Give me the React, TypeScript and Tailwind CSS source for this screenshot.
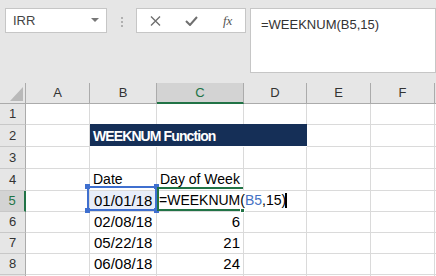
import React from 'react';

const rowHeights = [21, 22, 22, 22, 21, 21, 21, 21, 10];
const colLetters = ['A', 'B', 'C', 'D', 'E', 'F'];

const Toolbar: React.FC = () => (
  <div className="flex h-[83px] items-start bg-[#e6e6e6] pl-[5px] pt-[8px]">
    {/* Name box */}
    <div className="flex h-[25px] w-[102px] items-center justify-between border border-[#c6c6c6] bg-white pl-[7px] pr-[7px]">
      <span className="text-[13px] leading-[15px] text-[#444]">IRR</span>
      <svg width="8" height="5" viewBox="0 0 8 5">
        <path d="M0 0h8L4 4z" fill="#777" />
      </svg>
    </div>

    {/* Separator dots */}
    <div className="ml-[14px] mt-[9px] flex flex-col gap-[2px]">
      <span className="h-[2px] w-[2px] bg-[#b0b0b0]" />
      <span className="h-[2px] w-[2px] bg-[#b0b0b0]" />
      <span className="h-[2px] w-[2px] bg-[#b0b0b0]" />
    </div>

    {/* Cancel / enter / fx */}
    <div className="ml-[13px] flex h-[25px] w-[110px] items-center border border-[#c6c6c6] bg-white pl-[13px]">
      <svg width="11" height="10" viewBox="0 0 11 10">
        <path d="M1 0.5l9 9M10 0.5l-9 9" stroke="#6f6f6f" strokeWidth="1.4" />
      </svg>
      <svg className="ml-[24px]" width="13" height="10" viewBox="0 0 13 10">
        <path d="M1 5l4 4 7-8" stroke="#6f6f6f" strokeWidth="2" fill="none" />
      </svg>
      <span className="ml-[25px] font-['Liberation_Serif',serif] text-[13px] italic leading-[15px] text-[#555]">fx</span>
    </div>

    {/* Formula box */}
    <div className="ml-[4px] h-[65px] flex-1 border border-[#c6c6c6] bg-white pl-[10px] pt-[8px] text-[13px] leading-[15px] text-[#333]">
      =WEEKNUM(B5,15)
    </div>
  </div>
);

const cellContent = (r: number, c: number) => {
  if (r === 4 && c === 1) return <span className="pl-[3px] text-[14px]">Date</span>;
  if (r === 4 && c === 2) return <span className="pl-[3px] text-[14px]">Day of Week</span>;
  if (c === 1) {
    const dates: Record<number, string> = { 5: '01/01/18', 6: '02/08/18', 7: '05/22/18', 8: '06/08/18' };
    if (dates[r]) return <span className="pl-[4px] text-[15px]">{dates[r]}</span>;
  }
  if (r === 5 && c === 2)
    return (
      <span className="pl-[2px] text-[14px]">
        =WEEKNUM(<span className="text-[#4472c4]">B5</span>,15)
      </span>
    );
  if (c === 2) {
    const nums: Record<number, string> = { 6: '6', 7: '21', 8: '24' };
    if (nums[r]) return <span className="w-full pr-[3px] text-right text-[15px]">{nums[r]}</span>;
  }
  return null;
};

const Sheet: React.FC = () => (
  <div className="relative grid grid-cols-[26px_64px_67px_87px_63px_64px_64px_1fr] text-black">
    {/* Column headers */}
    <div className="relative h-[21px] border-r border-b border-[#ababab] bg-[#e6e6e6]">
      <svg className="absolute right-[2px] bottom-[2px]" width="13" height="14" viewBox="0 0 13 14">
        <path d="M13 0v14H0z" fill="#b9b9b9" />
      </svg>
    </div>
    {colLetters.map((l) => (
      <div
        key={l}
        className={`flex h-[21px] items-center justify-center border-r border-[#ababab] text-[13px] ${
          l === 'C'
            ? 'border-b-2 border-b-[#217346] bg-[#d3d3d3] text-[#217346]'
            : 'border-b bg-[#e6e6e6] text-[#333]'
        }`}
      >
        {l}
      </div>
    ))}
    <div className="h-[21px] border-b border-[#ababab] bg-[#e6e6e6]" />

    {/* Rows */}
    {rowHeights.map((h, i) => {
      const r = i + 1;
      const cells: React.ReactNode[] = [];
      cells.push(
        <div
          key={`h${r}`}
          style={{ height: h }}
          className={`flex items-center justify-center border-b border-[#c8c8c8] text-[13px] ${
            r === 5
              ? 'border-r-2 border-r-[#217346] bg-[#d3d3d3] text-[#217346]'
              : 'border-r border-r-[#ababab] bg-[#e6e6e6] text-[#333]'
          }`}
        >
          {r < 9 ? r : null}
        </div>
      );
      for (let c = 0; c < 7; c++) {
        if (r === 2 && c === 1) {
          cells.push(
            <div
              key={`c${r}${c}`}
              style={{ height: h }}
              className="col-span-3 -mt-px flex items-end bg-[#152f57] pb-[1px] pl-[3px] text-[14px] font-bold leading-[17px] tracking-[-0.9px] text-white"
            >
              WEEKNUM Function
            </div>
          );
          c += 2;
          continue;
        }
        const noRight = r === 5 && c === 2;
        cells.push(
          <div
            key={`c${r}${c}`}
            style={{ height: h }}
            className={`flex items-end whitespace-nowrap border-b border-[#dadada] pb-[2px] leading-[17px] ${
              noRight || c === 6 ? '' : 'border-r'
            } ${r === 5 && c === 1 ? 'bg-[#e8eef9]' : ''}`}
          >
            {cellContent(r, c)}
          </div>
        );
      }
      return <React.Fragment key={r}>{cells}</React.Fragment>;
    })}

    {/* B5 reference highlight */}
    <div className="pointer-events-none absolute left-[87px] top-[103px] h-[25px] w-[70px] border-2 border-[#3f6fcf]">
      <span className="absolute -left-[4px] -top-[4px] h-[5px] w-[5px] bg-[#3f6fcf]" />
      <span className="absolute -right-[4px] -top-[4px] h-[5px] w-[5px] bg-[#3f6fcf]" />
      <span className="absolute -left-[4px] -bottom-[4px] h-[5px] w-[5px] bg-[#3f6fcf]" />
      <span className="absolute -right-[4px] -bottom-[4px] h-[5px] w-[5px] bg-[#3f6fcf]" />
    </div>

    {/* C5 active cell */}
    <div className="pointer-events-none absolute left-[157px] top-[104px] h-[24px] w-[86px] border-y-2 border-l-2 border-[#217346]">
      <span className="absolute -right-[2px] -bottom-[4px] h-[5px] w-[5px] border border-white bg-[#217346]" />
    </div>

    {/* Edit cursor */}
    <div className="pointer-events-none absolute left-[285px] top-[110px] h-[15px] w-[2px] bg-black" />
  </div>
);

export default function App() {
  return (
    <div className="h-[276px] w-[436px] overflow-hidden bg-white font-['Liberation_Sans',Arial,sans-serif]">
      <Toolbar />
      <Sheet />
    </div>
  );
}
